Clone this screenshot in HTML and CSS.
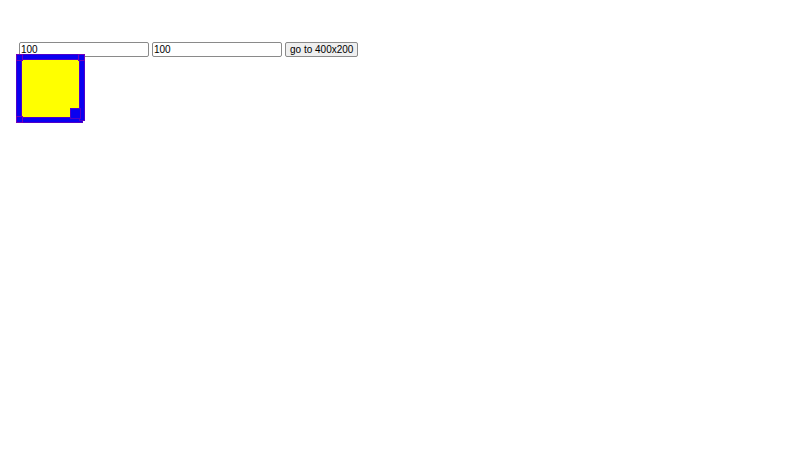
FILE: index.html
```
<!DOCTYPE html>
<html lang="en">
<head>
  <meta charset="utf-8">
  <title>Resize</title>
  <link rel="stylesheet" href="styles.css">
</head>
<body>
<form class="controls">
  <input type="text" id="width" aria-label="Width" value="100">
  <input type="text" id="height" aria-label="Height" value="100">
  <button type="button" id="go">go to 400x200</button>
</form>
<div class="resizable">
  <div class="handle left"></div>
  <div class="handle top"></div>
  <div class="handle bottom"></div>
  <div class="handle right"></div>
  <div class="handle corner tl"></div>
  <div class="handle corner tr"></div>
  <div class="handle corner bl"></div>
  <div class="handle grip"></div>
</div>
</body>
</html>
```

FILE: styles.css
```
body { margin: 0; padding: 42px 19px; background-color: #fff; font-family: "Liberation Sans", Arial, sans-serif; font-size: 10px; }
.controls { display: flex; gap: 3px; margin: 0; }
.controls input, .controls button { box-sizing: border-box; height: 15px; margin: 0; border: 1px solid #8a8a8a; border-radius: 2px; font: inherit; line-height: 13px; color: #000; }
.controls input { width: 130px; padding: 0 1px; background-color: #fff; }
.controls button { padding: 0 4px; background-color: #efefef; white-space: nowrap; }

.resizable { position: relative; width: 64px; height: 64px; background-color: yellow; }
.handle { position: absolute; box-sizing: border-box; background-color: #0a00f0; border: 1px solid #5000c8; }
.left { left: -3px; top: -3px; bottom: -2px; width: 6px; }
.right { right: -2px; top: -3px; bottom: 0; width: 6px; }
.top { left: -3px; right: -2px; top: -3px; height: 6px; }
.bottom { left: -3px; right: 0; bottom: -2px; height: 6px; }
.corner { width: 7px; height: 7px; border-color: #7400b8; }
.tl { left: -3px; top: -3px; }
.tr { right: -2px; top: -3px; }
.bl { left: -3px; bottom: -2px; }
.grip { right: 2px; bottom: 2px; width: 11px; height: 11px; }
```
